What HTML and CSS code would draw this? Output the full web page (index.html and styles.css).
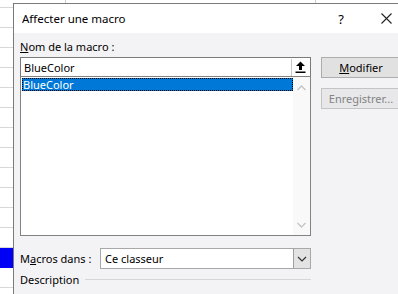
FILE: index.html
```html
<!DOCTYPE html>
<html lang="fr">
<head>
  <meta charset="UTF-8">
  <title>Affecter une macro</title>
  <link rel="stylesheet" href="styles.css">
</head>
<body>
  <div class="sheet">
    <div class="cell-blue"></div>
  </div>

  <div class="dialog">
    <div class="titlebar">
      <span class="title">Affecter une macro</span>
      <span class="help">?</span>
      <span class="close">
        <svg width="11" height="11" viewBox="0 0 11 11"><path d="M0.5 0.5L10.5 10.5M10.5 0.5L0.5 10.5" stroke="#222" stroke-width="1.1" fill="none"/></svg>
      </span>
    </div>

    <div class="content">
      <div class="main">
        <div class="label"><u>N</u>om de la macro :</div>
        <div class="namebox">
          <span class="value">BlueColor</span>
          <span class="ref">
            <svg width="11" height="12" viewBox="0 0 11 12"><path d="M5.5 0.5L10 5H7V9H4V5H1Z" fill="#000"/><rect x="0.5" y="10.5" width="10" height="1.5" fill="#000"/></svg>
          </span>
        </div>
        <div class="list">
          <div class="items">
            <div class="item selected">BlueColor</div>
          </div>
          <div class="scroll">
            <svg width="9" height="6" viewBox="0 0 9 6"><path d="M0.5 5L4.5 1L8.5 5" stroke="#c4c4c4" stroke-width="1.3" fill="none"/></svg>
            <svg width="9" height="6" viewBox="0 0 9 6"><path d="M0.5 1L4.5 5L8.5 1" stroke="#c4c4c4" stroke-width="1.3" fill="none"/></svg>
          </div>
        </div>
        <div class="row">
          <div class="label">M<u>a</u>cros dans :</div>
          <div class="select">
            <span class="value">Ce classeur</span>
            <span class="drop">
              <svg width="10" height="6" viewBox="0 0 10 6"><path d="M1 1L5 5L9 1" stroke="#333" stroke-width="1.2" fill="none"/></svg>
            </span>
          </div>
        </div>
        <div class="desc">
          <span>Description</span>
          <span class="rule"></span>
        </div>
      </div>

      <div class="side">
        <button class="btn"><u>M</u>odifier</button>
        <button class="btn" disabled>Enregistrer...</button>
      </div>
    </div>
  </div>
</body>
</html>
```

FILE: styles.css
```css
body {
  margin: 0;
  width: 398px;
  height: 294px;
  overflow: hidden;
  position: relative;
  font-family: "Noto Sans", "Liberation Sans", sans-serif;
  font-size: 11px;
  color: #000;
  background: #fff;
}
.sheet {
  position: absolute;
  inset: 0;
  background:
    linear-gradient(#fff, #fff) 0 0 / 100% 3px no-repeat,
    repeating-linear-gradient(to bottom, transparent 0, transparent 7px, #d8d8d8 7px, #d8d8d8 8px, transparent 8px, transparent 20px);
}
.sheet::before,
.sheet::after {
  content: "";
  position: absolute;
  top: 0;
  width: 1px;
  height: 3px;
  background: #d0d0d0;
}
.sheet::before { left: 65px; }
.sheet::after { left: 315px; }
.cell-blue {
  position: absolute;
  left: 0;
  top: 248px;
  width: 13px;
  height: 20px;
  background: #0000f5;
}
.dialog {
  position: absolute;
  left: 13px;
  top: 3px;
  width: 400px;
  height: 300px;
  background: #f3f2f5;
  border: 1px solid #7a7a7a;
  box-sizing: border-box;
}
.titlebar {
  height: 29px;
  background: #fff;
  display: flex;
  align-items: center;
  padding-left: 8px;
  font-size: 11.5px;
}
.title {
  flex: 1;
}
.help {
  width: 20px;
  text-align: center;
  margin-right: 30px;
  font-size: 13px;
}
.close {
  width: 11px;
  display: flex;
  margin-right: 20px;
}
.content {
  display: flex;
  gap: 10px;
  padding: 6px 0 0 6px;
}
.main {
  width: 291px;
  display: flex;
  flex-direction: column;
}
.label {
  line-height: 16px;
  height: 16px;
}
.namebox {
  margin-top: 2px;
  height: 19px;
  box-sizing: border-box;
  border: 1px solid #7a7a7a;
  border-bottom: 0;
  background: #fff;
  display: flex;
  align-items: center;
}
.namebox .value {
  flex: 1;
  padding-left: 3px;
}
.ref {
  width: 18px;
  height: 17px;
  box-sizing: border-box;
  border-left: 1px solid #c8c8c8;
  display: flex;
  align-items: center;
  justify-content: center;
  margin-right: 1px;
}
.list {
  height: 160px;
  box-sizing: border-box;
  border: 1px solid #828282;
  background: #fff;
  display: flex;
}
.items {
  flex: 1;
  padding: 1px 0 0 1px;
}
.item {
  height: 13px;
  line-height: 13px;
  padding-left: 1px;
}
.item.selected {
  background: #0078d7;
  color: #fff;
  outline: 1px dotted #000;
  outline-offset: -1px;
}
.scroll {
  width: 17px;
  background: #f9f9f9;
  display: flex;
  flex-direction: column;
  justify-content: space-between;
  align-items: center;
  padding: 8px 0 7px;
}
.row {
  margin-top: 12px;
  display: flex;
  align-items: center;
}
.row .label {
  width: 80px;
}
.select {
  flex: 1;
  height: 21px;
  box-sizing: border-box;
  border: 1px solid #a8a8a8;
  background: #fff;
  display: flex;
  align-items: center;
}
.select .value {
  flex: 1;
  padding-left: 4px;
}
.drop {
  width: 16px;
  height: 19px;
  background: #e3e3e3;
  border-left: 1px solid #a0a0a0;
  display: flex;
  align-items: center;
  justify-content: center;
}
.desc {
  margin-top: 3px;
  display: flex;
  align-items: center;
  gap: 6px;
  line-height: 16px;
}
.rule {
  flex: 1;
  height: 1px;
  background: #d6d6d6;
  margin-top: -1px;
}
.side {
  display: flex;
  flex-direction: column;
  gap: 10px;
  padding-top: 18px;
}
.btn {
  width: 80px;
  height: 21px;
  font: inherit;
  background: #e1e1e1;
  border: 1px solid #adadad;
  color: #000;
  padding: 0;
}
.btn:disabled {
  background: #e8e8ea;
  border-color: #c4c4c4;
  color: #838383;
}
```
